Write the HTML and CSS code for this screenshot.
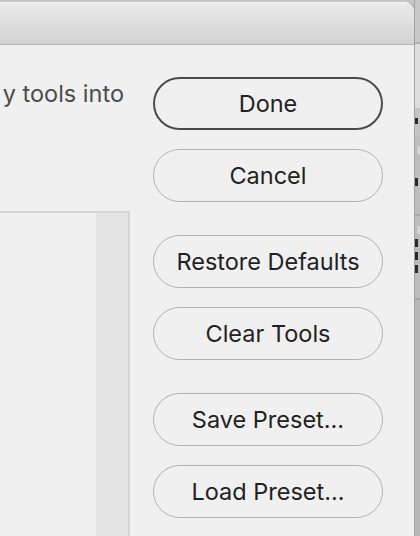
FILE: index.html
```html
<!DOCTYPE html>
<html>
<head>
<meta charset="utf-8">
<link rel="stylesheet" href="styles.css">
</head>
<body>
<div class="screen">
  <div class="window">
    <div class="titlebar"></div>
    <div class="content">
      <div class="left">
        <div class="desc">y tools into</div>
        <div class="listbox">
          <div class="list"></div>
          <div class="track"></div>
        </div>
      </div>
      <div class="buttons">
        <div class="group">
          <div class="btn primary">Done</div>
          <div class="btn">Cancel</div>
        </div>
        <div class="group">
          <div class="btn">Restore Defaults</div>
          <div class="btn">Clear Tools</div>
        </div>
        <div class="group">
          <div class="btn">Save Preset...</div>
          <div class="btn">Load Preset...</div>
        </div>
      </div>
    </div>
  </div>
  <div class="behind">
    <div class="b-top"></div>
    <div class="b-light"></div>
    <div class="b-band"><span class="mark dark small"></span></div>
    <div class="b-mid"><span class="mark light"></span><span class="mark dark"></span></div>
    <div class="b-low"><span class="mark light"></span><span class="mark dark"></span><span class="mark dark"></span><span class="mark dark"></span></div>
    <div class="b-rest"></div>
  </div>
</div>
</body>
</html>
```
FILE: styles.css
```css
html, body {
  margin: 0;
  padding: 0;
  width: 420px;
  height: 536px;
  overflow: hidden;
  background: #c6c6c6;
}
.screen {
  display: flex;
  width: 420px;
  height: 536px;
}
.window {
  width: 414px;
  margin-top: 2px;
  display: flex;
  flex-direction: column;
  background: #f0f0f0;
  border-top-right-radius: 9px;
  overflow: hidden;
  box-shadow: 1px 0 0 #9c9c9c;
  font-family: Inter, "Noto Sans", sans-serif;
}
.titlebar {
  height: 41px;
  flex: none;
  background: linear-gradient(#ebeaeb, #d3d2d3);
  border-top: 1px solid #f4f4f4;
  border-bottom: 1px solid #b6b6b6;
}
.content {
  flex: 1;
  display: flex;
}
.left {
  width: 153px;
  flex: none;
  display: flex;
  flex-direction: column;
  overflow: hidden;
}
.desc {
  height: 166px;
  flex: none;
  padding-top: 34px;
  padding-right: 29px;
  box-sizing: border-box;
  text-align: right;
  white-space: nowrap;
  font-size: 23.5px;
  color: #4b4b4b;
}
.listbox {
  flex: 1;
  width: 130px;
  display: flex;
  border-top: 2px solid #d6d6d6;
  border-right: 2px solid #d3d3d3;
  box-sizing: border-box;
}
.list {
  width: 96px;
  background: #f0f0f0;
}
.track {
  flex: 1;
  background: #e4e4e4;
}
.buttons {
  width: 230px;
  padding-top: 32px;
  display: flex;
  flex-direction: column;
  gap: 33px;
}
.group {
  display: flex;
  flex-direction: column;
  gap: 19px;
}
.btn {
  height: 53px;
  box-sizing: border-box;
  border: 1.5px solid #b1b1b1;
  border-radius: 27px;
  display: flex;
  align-items: center;
  justify-content: center;
  font-size: 23.5px;
  color: #222;
  padding-bottom: 1px;
}
.btn.primary {
  border: 2px solid #4a4a4a;
}
.behind {
  flex: 1;
  display: flex;
  flex-direction: column;
  background: #b9b9b9;
  border-left: 1px solid #a4a4a4;
}
.b-top {
  height: 42px;
  background: #c8c8c8;
  border-bottom: 2px solid #b0b0b0;
}
.b-light {
  height: 64px;
  background: #dcdcdc;
}
.b-band {
  height: 28px;
  background: #c4c4c4;
  position: relative;
}
.b-mid {
  height: 80px;
  background: #bdbdbd;
  border-bottom: 2px solid #a9a9a9;
  display: flex;
  flex-direction: column;
  gap: 24px;
  padding-top: 10px;
  box-sizing: border-box;
}
.b-low {
  height: 84px;
  background: #bcbcbc;
  border-bottom: 2px solid #a5a5a5;
  display: flex;
  flex-direction: column;
  gap: 5px;
  padding-top: 10px;
  box-sizing: border-box;
}
.b-rest {
  flex: 1;
  background: #b8b8b8;
}
.mark {
  display: block;
  width: 3px;
  height: 8px;
  margin-left: 2px;
}
.mark.light { background: #d3d3d3; }
.mark.dark { background: #2a2a2a; margin-left: 0; }
.mark.small { position: absolute; left: 0; top: 10px; height: 6px; }
```
